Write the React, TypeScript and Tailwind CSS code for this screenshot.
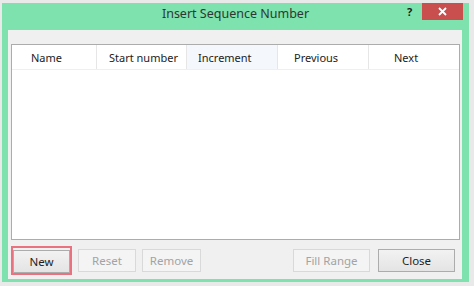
const columns = [
  { label: "Name", width: "w-[85px]", pad: "pl-[19px]" },
  { label: "Start number", width: "w-[90px]", pad: "pl-[12px]" },
  { label: "Increment", width: "w-[91px]", pad: "pl-[11px]", active: true },
  { label: "Previous", width: "w-[91px]", pad: "pl-[16px]" },
  { label: "Next", width: "flex-1", pad: "pl-[25px]" },
];

function DialogButton({
  label,
  disabled,
  className = "",
}: {
  label: string;
  disabled?: boolean;
  className?: string;
}) {
  return (
    <button
      type="button"
      className={`h-[23px] border text-[11.5px] ${
        disabled
          ? "border-[#d9d9d9] bg-[#f4f4f4] text-[#a3a3a3]"
          : "border-[#acacac] bg-gradient-to-b from-[#f2f2f2] to-[#e4e4e4] text-[#1e1e1e]"
      } ${className}`}
    >
      {label}
    </button>
  );
}

export default function App() {
  return (
    <div
      className="h-[286px] w-[474px] overflow-hidden bg-[#e9e9e9] pl-[2px] pt-[3px]"
      style={{ fontFamily: '"Noto Sans", "Open Sans", sans-serif' }}
    >
      <div className="flex h-[279px] w-[467px] flex-col bg-[#7de2ae]">
        {/* TITLE BAR */}
        <div className="relative flex h-[27px] items-center justify-center pb-[4px]">
          <span className="text-[12.5px] text-[#2d3833]">Insert Sequence Number</span>
          <span className="absolute left-[405px] top-[1px] text-[11px] font-bold text-[#1c1c1c]">
            ?
          </span>
          <div className="absolute left-[420px] top-0 flex h-[17px] w-[41px] items-center justify-center bg-[#c94f4f]">
            <svg width="9" height="9" viewBox="0 0 9 9">
              <path d="M1 1L8 8M8 1L1 8" stroke="#fff" strokeWidth="1.8" />
            </svg>
          </div>
        </div>

        {/* CLIENT */}
        <div className="mb-[3px] ml-[6px] mr-[7px] flex flex-1 flex-col bg-[#f0f0f0] pl-[3px] pr-[2px] pt-[14px]">
          <div className="h-[196px] border border-[#acacac] bg-white">
            <div className="flex h-[25px] border-b border-[#efefef]">
              {columns.map((col) => (
                <div
                  key={col.label}
                  className={`${col.width} ${col.pad} flex items-center border-r border-[#e6e6e6] pt-[2px] text-[11px] text-[#222] last:border-r-0 ${
                    col.active ? "bg-[#f4f8fd]" : ""
                  }`}
                >
                  {col.label}
                </div>
              ))}
            </div>
          </div>

          <div className="mt-[6px] flex items-center">
            <div className="border-2 border-[#e8727f] p-0">
              <DialogButton label="New" className="w-[57px] border-[#7aa7d6]" />
            </div>
            <DialogButton label="Reset" disabled className="ml-[6px] w-[58px]" />
            <DialogButton label="Remove" disabled className="ml-[6px] w-[59px]" />
            <DialogButton label="Fill Range" disabled className="ml-auto w-[77px]" />
            <DialogButton label="Close" className="ml-[8px] mr-[5px] w-[77px]" />
          </div>
        </div>
      </div>
    </div>
  );
}
